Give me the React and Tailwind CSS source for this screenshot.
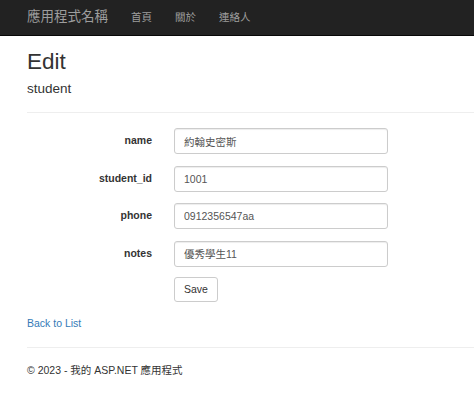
export default function App() {
    const fields = [
        { label: "name", value: "約翰史密斯" },
        { label: "student_id", value: "1001" },
        { label: "phone", value: "0912356547aa" },
        { label: "notes", value: "優秀學生11" },
    ];

    return (
        <div className="min-h-[405px] bg-white text-[#333] font-['Liberation_Sans','Noto_Sans_CJK_TC',sans-serif]">
            {/* Navbar */}
            <nav className="h-[36px] bg-[#222] border-b border-[#080808] flex items-center pl-[27px]">
                <span className="text-[13.5px] text-[#9d9d9d]">應用程式名稱</span>
                <div className="flex ml-[23px] gap-[23px] text-[10.5px] text-[#9d9d9d]">
                    <span>首頁</span>
                    <span>關於</span>
                    <span>連絡人</span>
                </div>
            </nav>

            {/* Body */}
            <div className="pl-[27px]">
                <h2 className="mt-[13px] text-[22.5px] leading-[26px]">Edit</h2>
                <h4 className="mt-[6px] text-[13.5px] leading-[16px]">student</h4>
                <hr className="mt-[15px] border-t border-[#eee]" />

                <form className="mt-[15px] flex flex-col gap-[11.5px]">
                    {fields.map((f) => (
                        <div key={f.label} className="flex items-center">
                            <label className="w-[125px] text-right text-[10.5px] font-bold">{f.label}</label>
                            <input
                                readOnly
                                value={f.value}
                                className="ml-[22px] w-[214px] h-[26px] px-[9px] border border-[#ccc] rounded-[3px] text-[10.5px] text-[#555] outline-none shadow-[inset_0_1px_1px_rgba(0,0,0,0.075)]"
                            />
                        </div>
                    ))}
                    <div className="pl-[147px] -mt-[2px]">
                        <button type="button" className="w-[44px] h-[25px] border border-[#ccc] rounded-[3px] bg-white text-[10.5px] text-[#333]">
                            Save
                        </button>
                    </div>
                </form>

                <div className="mt-[8px]">
                    <a className="text-[10.5px] text-[#337ab7]">Back to List</a>
                </div>
                <hr className="mt-[13px] border-t border-[#eee]" />
                <footer className="mt-[15px] text-[10.5px]">© 2023 - 我的 ASP.NET 應用程式</footer>
            </div>
        </div>
    );
}
